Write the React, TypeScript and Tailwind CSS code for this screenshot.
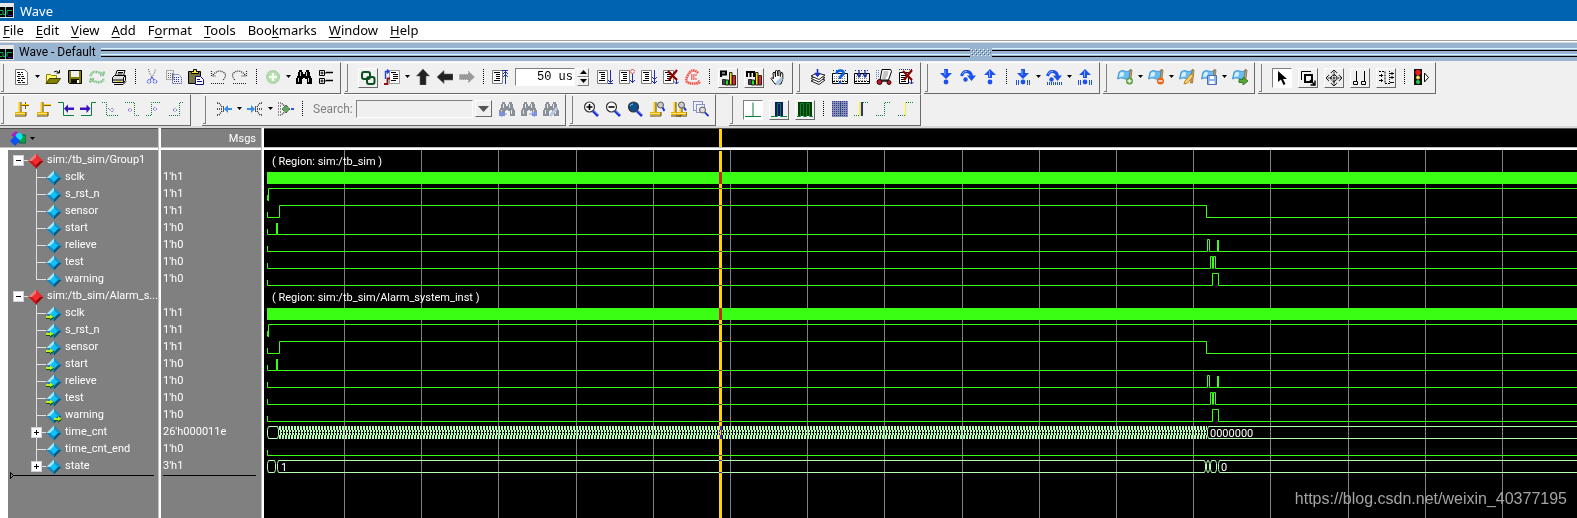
import React, { useState } from 'react';
import clsx from 'clsx';

/* ---------- icons, all on a 16x16 grid ---------- */

const RunDoc = ({ children }: { children?: React.ReactNode }) => (
  <>
    <path d="M0.500 1.500h10v13h-10z" fill="#fff" stroke="#808080" />
    <path d="M2 3.500h6M4 5.500h4M4 7.500h4M4 9.500h4M2 11.500h6" stroke="#000" />
    {children}
  </>
);

const Flag = ({ children }: { children?: React.ReactNode }) => (
  <>
    <path d="M13 0.500l2 0.500-1.500 13h-2z" fill="#d8a050" stroke="#8a5a1c" strokeWidth=".7" />
    <path d="M2 3Q4.500 0.500 7.500 2T13 1.500L12 9.500Q9 11 6.500 9.500T0.500 10z" fill="#6cbcf0" stroke="#2a86c8" strokeWidth=".8" />
    <path d="M3 4Q5 2.500 7 3.500L6.500 7.500Q4 7 2 8.500z" fill="#d5f0ff" />
    {children}
  </>
);

const Binoculars = ({ color = '#000', children }: { color?: string; children?: React.ReactNode }) => (
  <>
    <path d="M3 1h3v2h1v2h2V3h1V1h3v2h1v4h1v2h1v6h-5v-5H9V9H7v1H6v5H0V9h1V7h1V3h1z" fill={color} />
    <path d="M4.500 3v4M2.500 9v4M10.500 3v4M12.500 9v4" stroke="#fff" strokeWidth=".8" />
    {children}
  </>
);

const Lens = ({ fill = '#fff', children }: { fill?: string; children?: React.ReactNode }) => (
  <>
    <circle cx="6.500" cy="6" r="5" fill={fill} stroke="#333" strokeWidth="1.200" />
    <path d="M10 10l5 5" stroke="#1c2fd0" strokeWidth="2.600" />
    <path d="M10.500 9.500l4 4" stroke="#7fa0ff" strokeWidth=".7" />
    {children}
  </>
);

const CursorBar = ({ x = 0 }: { x?: number }) => (
  <g transform={`translate(${x} 0)`}>
    <path d="M5.500 1v10" stroke="#ffcf10" strokeWidth="2" />
    <path d="M7 1v10" stroke="#5a4300" />
    <path d="M1.500 11.500h10v2h-10z" fill="#ffe680" stroke="#e5b000" />
    <path d="M1 15h11V11" fill="none" stroke="#5a4300" />
  </g>
);

const BLUE = '#1e50f0';
const StepDown = () => (
  <>
    <path d="M6 0h4v4h4L8 10 2 4h4z" fill={BLUE} />
    <circle cx="8" cy="13" r="2.400" fill={BLUE} />
    <path d="M7 1v5" stroke="#7fb0ff" />
  </>
);
const StepUp = () => (
  <>
    <path d="M6 9h4V6h4L8 0 2 6h4z" fill={BLUE} />
    <circle cx="8" cy="13" r="2.400" fill={BLUE} />
    <path d="M7.500 2v6" stroke="#7fb0ff" />
  </>
);
const StepOver = () => (
  <>
    <path d="M1.500 7Q3 2 7 2.500T11.500 7" fill="none" stroke={BLUE} strokeWidth="3" />
    <path d="M7 6.500h9L11.500 12z" fill={BLUE} />
    <circle cx="5.500" cy="10.500" r="2.200" fill={BLUE} />
    <path d="M2 5Q4 2 7 2.500" fill="none" stroke="#8fb8ff" />
  </>
);
const BlueTicks = () => <path d="M1.500 11v5M3.500 11v5M12.500 11v5M14.500 11v5" stroke={BLUE} />;

const Film = ({ children }: { children?: React.ReactNode }) => (
  <>
    <path d="M0.500 4.500h15v10h-15z" fill="#fff" stroke="#000" />
    <path d="M1 1.500h14" stroke="#1a2d90" strokeDasharray="1 2" />
    <path d="M2 7.500h12M2 9.500h12M2 11.500h12" stroke="#888" strokeDasharray="1 1" />
    <path d="M1 12.500h14" stroke="#000" strokeDasharray="2 1" />
    {children}
  </>
);

const RedX = () => <path d="M5 2l9 9M14 1L6 11" stroke="#8b0000" strokeWidth="2.200" />;

const Bars = ({ letter }: { letter: 'p' | 'm' }) => (
  <>
    {letter === 'p'
      ? <path d="M1 7V1.500h5v3H2" fill="none" stroke="#000" strokeWidth="2" />
      : <path d="M1 7V2h7v5M4.500 2v5" fill="none" stroke="#000" strokeWidth="2" />}
    <path d="M2.500 9.500h3v5h-3z" fill="#444" stroke="#222" />
    <path d="M5.500 10h3v5h-3z" fill="#20e020" stroke="#222" />
    <path d="M9.500 2.500H12v12.500H9.500z" fill="#ffe000" stroke="#222" />
    <path d="M12.500 5.500H15.500v9.500h-3z" fill="#f02020" stroke="#222" />
  </>
);

const Arrow = ({ turn = 0, fill = '#222', faint = false }: { turn?: number; fill?: string; faint?: boolean }) => (
  <path
    d="M8 0l6.500 7H11v9H5V7H1.500z"
    fill={fill}
    stroke={faint ? '#f0f0f0' : '#666'}
    strokeWidth={faint ? 1 : 0.6}
    strokeDasharray={faint ? '1 1' : undefined}
    transform={`rotate(${turn} 8 8)`}
  />
);

const icons: Record<string, React.ReactNode> = {
  newDoc: (
    <>
      <path d="M1.500 0.500h9l3 3v12h-12z" fill="#fff" stroke="#777" />
      <path d="M3 3.500h6M4 5.500h5M3 7.500h8M4 9.500h7M3 11.500h6M4 13.500h7" stroke="#111" strokeDasharray="3 1" />
    </>
  ),
  open: (
    <>
      <path d="M1.500 14.500v-9h4l1 1h5v3" fill="#ffff70" stroke="#908000" />
      <path d="M1 14.500L4.500 9.500h11L12 14.500z" fill="#808000" stroke="#3f3f00" />
      <path d="M9 3Q11 1 14 3.500M14.500 1v3h-3" fill="none" stroke="#000" />
    </>
  ),
  save: (
    <>
      <path d="M1.500 1.500h13v13h-12l-1-1z" fill="#808000" stroke="#000" />
      <path d="M4 2h8v6H4z" fill="#efefef" />
      <path d="M4 10h8v5H4z" fill="#111" />
      <path d="M10 11h2v3h-2z" fill="#fff" />
    </>
  ),
  refresh: (
    <g fill="none" stroke="#7fc08a" strokeWidth="2.600" strokeDasharray="1 .5">
      <path d="M1.500 7Q3 2 8 3t6 3M11 6h4V2" />
      <path d="M14.500 10Q13 14 8 13T2 10M5 10H1v4" />
    </g>
  ),
  print: (
    <>
      <path d="M4.500 6.500L6 1.500h8L12.500 6.500" fill="#fff" stroke="#000" />
      <path d="M7 3.500h5M6.500 5h5" stroke="#000" />
      <path d="M1.500 8.500l2-2h11l-2 2v5h-11z" fill="#ddd" stroke="#000" />
      <path d="M12.500 13.500l2-2v-5M2 11h10M3 15.500h9l3-3" fill="none" stroke="#000" />
      <path d="M6 12.500h4" stroke="#e0d000" />
    </>
  ),
  cut: (
    <>
      <path d="M4.500 0l1 4 2.500 4 2.500-4 1-4" fill="none" stroke="#555" strokeDasharray="1 1" />
      <path d="M8 8l-2 3M8 8l2 3" stroke="#3040f0" />
      <circle cx="5" cy="12.500" r="1.800" fill="none" stroke="#3040f0" strokeDasharray="2 1" />
      <circle cx="11" cy="12.500" r="1.800" fill="none" stroke="#3040f0" strokeDasharray="2 1" />
    </>
  ),
  copy: (
    <g fill="none" strokeDasharray="1 1">
      <path d="M0.500 1.500h7v9h-7zM2 4.500h5M2 6.500h5M2 8.500h5" stroke="#666" />
      <path d="M6.500 5.500h6l3 3v6h-9zM8 8.500h5M8 10.500h6M8 12.500h6" stroke="#2030a0" />
    </g>
  ),
  paste: (
    <>
      <path d="M0.500 2.500h12v12h-12z" fill="#7a7840" stroke="#000" />
      <path d="M3.500 3.500v-1h2v-2h3v2h2v2h-7z" fill="#ffe040" stroke="#000" />
      <path d="M7.500 7.500h5l3 3v5h-8z" fill="#fff" stroke="#101080" />
      <path d="M9 10.500h3M9 12.500h5" stroke="#101080" />
    </>
  ),
  undo: <path d="M1.500 2v5h5M3 6Q8 0 13 3t0 8M1 14.500h14" fill="none" stroke="#222" strokeWidth="1.200" strokeDasharray="1 1" />,
  redo: <path d="M14.500 2v5H9M13 6Q8 0 3 3t0 8M1 14.500h14" fill="none" stroke="#222" strokeWidth="1.200" strokeDasharray="1 1" />,
  add: (
    <>
      <circle cx="8" cy="8" r="6.500" fill="#b4dcae" stroke="#8abf85" strokeDasharray="1 .6" />
      <path d="M8 4v8M4 8h8" stroke="#f4fff0" strokeWidth="2.400" />
    </>
  ),
  find: <Binoculars />,
  tree: (
    <g fill="none" stroke="#000">
      <path d="M1.500 1.500h5v5h-5zM1.500 9.500h5v5h-5zM4 2.500v3M2.500 4h3M4 10.500v3M2.500 12h3M7 4h1M7 12h1" />
      <path d="M8 3.500h7M8 11.500h7" strokeWidth="1.400" />
    </g>
  ),
  link: (
    <g fill="none" stroke="#0a5020" strokeWidth="2">
      <rect x="2" y="2" width="8" height="7" rx="2" />
      <rect x="7" y="7" width="7.500" height="7" rx="2" />
    </g>
  ),
  restart: (
    <>
      <path d="M5.500 1.500h10v13h-10z" fill="#fff" stroke="#999" />
      <path d="M7 3.500h5M9 5.500h5M9 7.500h5M9 9.500h5M7 11.500h5" stroke="#000" />
      <path d="M1.500 10V2.500H4M3 .5L5 2.500 3 4.500" stroke="#2040e0" strokeWidth="1.400" fill="none" />
      <path d="M0 15h3.500V9.500H6" fill="none" stroke="#90101a" strokeWidth="1.800" />
    </>
  ),
  up: <Arrow />,
  left: <Arrow turn={270} />,
  right: <Arrow turn={90} fill="#999" faint />,
  runTop: <RunDoc><path d="M13.500 2v13M10 1.500h6M11 5l2.500-2.500L16 5M11 8l2.500-2.500L16 8" fill="none" stroke="#1c2fa8" /></RunDoc>,
  run: <RunDoc><path d="M13.500 1v12M11 11l2.500 2.500L16 11M11 14.500h5" fill="none" stroke="#1c2fa8" /></RunDoc>,
  runNext: <RunDoc><path d="M13.500 5v9M11 11l2.500 2.500L16 11" fill="none" stroke="#1c2fa8" /><path d="M13.500 0L16 2.500 13.500 5 11 2.500z" fill="#fff" stroke="#e03030" /></RunDoc>,
  runAll: <RunDoc><path d="M13.500 1v14M11 8l2.500 2.500L16 8M11 12l2.500 2.500L16 12" fill="none" stroke="#1c2fa8" /></RunDoc>,
  runBreak: <RunDoc><path d="M13.500 9v6M11 12.500l2.500 2.500L16 12.500" fill="none" stroke="#1c2fa8" /><RedX /></RunDoc>,
  stop: (
    <g fill="none" stroke="#f05048" strokeDasharray="1.500 .6">
      <path d="M13 4Q11 1.500 8 1.500T2 8t6 6.500 5-2.500" strokeWidth="2.600" />
      <path d="M6 6h6M6 8h4M6 10h6" strokeWidth="1.400" />
    </g>
  ),
  profP: <Bars letter="p" />,
  profM: <Bars letter="m" />,
  hand: (
    <>
      <path d="M5 15L1 9.500Q1 8 3.500 9.500L3 4Q4 2 5 4l.5 4V2Q6.500 0 7.500 2l.5 5V2Q9 .5 10 2l.3 5.500L11 3.500Q12.500 3 12.800 5v5L11 15z" fill="#fff" stroke="#111" />
      <path d="M6 13l5-5 2 2-4 6H6z" fill="#a8c4e8" />
    </>
  ),
  layers: (
    <g fill="#fff" stroke="#222">
      <path d="M1 12l6-3 8 2-6 4.500z" />
      <path d="M1 9.500l6-3 8 2-6 4.500z" />
      <path d="M1 7l6-3 8 2-6 4.500z" />
      <path d="M7.500 0v6M5 4l2.500 3L10 4" stroke="#1c2fc8" strokeWidth="1.600" fill="none" />
    </g>
  ),
  filmHelp: <Film><path d="M4.500 5Q5 1.500 8.500 1.500t3 3.500Q8 7 8 10M8 12.500v2.500" fill="none" stroke="#0a60e0" strokeWidth="2.600" /></Film>,
  filmArrows: <Film><path d="M5 1v6M11 1v6M3 5l2 3 2-3M9 5l2 3 2-3" fill="none" stroke="#1c2fa8" strokeWidth="1.300" /></Film>,
  scroll: (
    <>
      <path d="M0 1.500h4M0 3.500h4M0 5.500h4M0 7.500h3M0 9.500h2" stroke="#7080c0" strokeDasharray="1 1" />
      <path d="M6 .5h8.500l1 2L12.500 11H4z" fill="#fff" stroke="#000" />
      <path d="M7.500 3h5M7 5h5M6.500 7h5M6 9h4" stroke="#888" />
      <circle cx="3.500" cy="13" r="2.500" fill="#c01828" stroke="#400" />
      <circle cx="13" cy="13.500" r="2" fill="#c01828" stroke="#400" />
      <path d="M5 12h7" stroke="#000" strokeWidth="1.400" />
    </>
  ),
  filmBreak: (
    <>
      <path d="M1.500 3.500h9v11h-9z" fill="#fff" stroke="#000" />
      <path d="M1 0.500h14" stroke="#1a2d90" strokeDasharray="1 1" />
      <path d="M3 6.500h5M3 8.500h5M3 10.500h5M3 12.500h5" stroke="#000" />
      <path d="M13.500 11v4M11.500 13l2 2 2-2" stroke="#1c2fa8" fill="none" />
      <RedX />
    </>
  ),
  stepIn: <StepDown />,
  stepOver: <StepOver />,
  stepOut: <StepUp />,
  stepInTicks: <><StepDown /><BlueTicks /></>,
  stepOverTicks: <><StepOver /><path d="M1 14.500h15" stroke={BLUE} strokeWidth="3" strokeDasharray="1 1" /></>,
  stepOutTicks: <><StepUp /><BlueTicks /></>,
  flagAdd: <Flag><circle cx="12.500" cy="12" r="3.500" fill="#5aa040" /><path d="M12.500 10v4M10.500 12h4" stroke="#fff" strokeWidth="1.400" /></Flag>,
  flagDel: <Flag><circle cx="12.500" cy="12" r="3.500" fill="#f06418" /><path d="M10.500 12h4" stroke="#fff" strokeWidth="1.400" /></Flag>,
  flagEdit: <Flag><path d="M5 15l1-3 6-7 2.500 2-6 7z" fill="#ffd070" stroke="#c08020" /></Flag>,
  flagSave: <Flag><path d="M6.500 6.500h9v9h-9z" fill="#8fb4e8" stroke="#4a70b8" /><path d="M9 7h4v3H9zM8.500 12h5v3h-5z" fill="#fff" /></Flag>,
  flagGo: <Flag><path d="M7 10.500h4V8l5 4-5 4v-2.500H7z" fill="#5aa83c" stroke="#3a7a24" /></Flag>,
  pointer: <path d="M4 1v11l3-2.500 2.500 5.500 2-1L9 9h4z" fill="#000" />,
  zoomBox: (
    <g fill="none" stroke="#000">
      <path d="M1.500 10V1.500h9.500" />
      <path d="M5 5h7v7H5z" strokeWidth="2" />
      <path d="M10 10l5 5M15 10.500V15h-4.500" strokeWidth="1.400" />
    </g>
  ),
  move: <path d="M8 0v16M0 8h16M8 0L5 3M8 0l3 3M8 16l-3-3M8 16l3-3M0 8l3-3M0 8l3 3M16 8l-3-3M16 8l-3 3M8 4l4 4-4 4-4-4z" fill="none" stroke="#000" strokeWidth="1.200" strokeDasharray="1 .7" />,
  measure: <path d="M4.500 1v11M12.500 1v11M1.500 11.500h4v3h-4zM9.500 11.500h4v3h-4z" fill="none" stroke="#000" />,
  edges: (
    <g fill="none" stroke="#000">
      <path d="M1 1.500h6v12h5" strokeDasharray="2 1" />
      <path d="M11.500 1v12" strokeDasharray="1 1" />
      <path d="M1 5.500h4M3.500 4v3M1 10.500h4M3.500 9v3M12 3.500h4M14 2v3M12 7.500h4M14 6v3M12 12.500h4" />
    </g>
  ),
  traffic: (
    <>
      <path d="M1 0h8v16H1z" fill="#111" />
      <circle cx="5" cy="3.500" r="2.700" fill="#f01818" />
      <circle cx="5" cy="8.500" r="1.900" fill="#f5e050" />
      <circle cx="5" cy="13" r="2" fill="#20d040" />
      <path d="M11.500 4v9l4-4.500z" fill="#fff" stroke="#111" />
    </>
  ),
  cursorAdd: <><CursorBar /><path d="M11.500 1v7M8 4.500h7" stroke="#806000" /><path d="M8 3.500h7" stroke="#ffcf10" /></>,
  cursorDel: <><CursorBar /><path d="M8 4.500h7" stroke="#806000" /><path d="M8 3.500h7" stroke="#ffcf10" /></>,
  edgePrev: <><path d="M0 1.500h5.500v13H16" fill="none" stroke="#0a8038" /><path d="M6 7.500l4-4v3h6v2.500h-6v3z" fill="#3a10c0" /></>,
  edgeNext: <><path d="M16 1.500h-4.500v13H1" fill="none" stroke="#0a8038" /><path d="M10.500 7.500l-4-4v3H0v2.500h6.500v3z" fill="#3a10c0" /></>,
  fallPrev: <><path d="M0 1.500h4.500v13H16" fill="none" stroke="#0a8038" strokeDasharray="1 1" /><path d="M6 7l2 2 2-2 2 2-2 2-2-2" fill="none" stroke="#6040d0" strokeDasharray="1 1" /></>,
  fallNext: <><path d="M1 1.500h9.500v13H16" fill="none" stroke="#0a8038" strokeDasharray="1 1" /><path d="M4 9l2-2 2 2-2 2z" fill="none" stroke="#6040d0" strokeDasharray="1 1" /></>,
  risePrev: <><path d="M0 14.500h5.500v-13H15" fill="none" stroke="#0a8038" strokeDasharray="1 1" /><path d="M7 8l2-2 2 2-2 2z" fill="none" stroke="#6040d0" strokeDasharray="1 1" /></>,
  riseNext: <><path d="M1 14.500h10.500v-13H16" fill="none" stroke="#0a8038" strokeDasharray="1 1" /><path d="M5 9l2-2 2 2-2 2z" fill="none" stroke="#6040d0" strokeDasharray="1 1" /></>,
  expand: <><path d="M1 2h2l3 4h2M1 8h7M1 14h2l3-4h2" fill="none" stroke="#222" strokeWidth="1.300" strokeDasharray="1 1" /><path d="M8 8l4-4v3h4v2h-4v3z" fill="#3c8cf0" /></>,
  collapse: <><path d="M15 2h-2l-3 4H8M15 8H8M15 14h-2l-3-4H8" fill="none" stroke="#222" strokeWidth="1.300" strokeDasharray="1 1" /><path d="M8 8L4 4v3H0v2h4v3z" fill="#3c8cf0" /></>,
  expandAll: <><path d="M0 2h3l4 3M0 14h3l4-3M0 8h4M0 5h4M0 11h4" fill="none" stroke="#222" strokeWidth="1.200" strokeDasharray="1 1" /><path d="M8 4l4 4-4 4-4-4z" fill="#5ca860" stroke="#222" strokeDasharray="1 1" /><path d="M13 8h3" stroke="#3050f0" strokeWidth="2" /></>,
  findPrev: <Binoculars color="#8a8f98"><path d="M0 13l3-2.500v5zM3 13h5" fill="#7a90f8" stroke="#7a90f8" /></Binoculars>,
  findNext: <Binoculars color="#8a8f98"><path d="M16 13l-3-2.500v5zM13 13H8" fill="#7a90f8" stroke="#7a90f8" /></Binoculars>,
  findOpts: <Binoculars color="#8a8f98"><path d="M7 15l7-8" stroke="#b8c8e0" strokeWidth="3" /></Binoculars>,
  zoomIn: <Lens><path d="M6.500 3v6M3.500 6h6" stroke="#000" strokeWidth="1.600" /></Lens>,
  zoomOut: <Lens><path d="M3.500 6h6" stroke="#000" strokeWidth="1.600" /></Lens>,
  zoomFull: <Lens fill="#0c5090"><path d="M3 5q1-2 3-2" fill="none" stroke="#9cd0ff" /></Lens>,
  zoomCursor: <><CursorBar /><circle cx="11.500" cy="4" r="3" fill="#ccc" stroke="#555" /><path d="M13.500 6.500l2 3.500" stroke="#2030d0" strokeWidth="2" /></>,
  zoomTwo: <><CursorBar x={-2} /><CursorBar x={4} /><circle cx="10.500" cy="4" r="3" fill="#ccc" stroke="#555" /><path d="M13 6.500l2 3" stroke="#2030d0" strokeWidth="2" /></>,
  zoomRange: <><path d="M0.500 0.500h9v3M0.500 0.500v9h3M3.500 3.500h8v8h-8z" fill="none" stroke="#2038a0" strokeDasharray="1 1" /><circle cx="9.500" cy="9" r="3" fill="#ddd" stroke="#555" /><path d="M12 11.500l3.500 3.500" stroke="#2030d0" strokeWidth="1.800" /></>,
  fmtLogic: <path d="M0 14.500h16M8 14V0.500" stroke="#0a8038" />,
  fmtLiteral: <><path d="M4 0h8v14H4z" fill="#101868" /><path d="M0 14.500h6.500V1.500h3v13H16" fill="none" stroke="#0a8038" /></>,
  fmtEvent: <><path d="M1 0h14v14H1z" fill="#004000" /><path d="M0 14.500h3.500V1.500h3v13h3V1.500h3v13H16" fill="none" stroke="#0a8038" /></>,
  fmtGrid: <><path d="M0 0h16v16H0z" fill="#8c90bc" /><path d="M0 .5h16M0 2.500h16M0 4.500h16M0 6.500h16M0 8.500h16M0 10.500h16M0 12.500h16M0 14.500h16" stroke="#2c3488" strokeDasharray="1 1" /><path d="M8.500 1v14" stroke="#0a8038" strokeDasharray="1 1" /></>,
  fmtBoth: <><path d="M5 1h2v14H5z" fill="#f8f040" /><path d="M7 1h2v14H7z" fill="#2c3488" /><path d="M0 14.500h5M9 1.500h6" stroke="#0a8038" strokeDasharray="1 1" /></>,
  fmtRise: <path d="M0 14.500h8.500v-13H15" fill="none" stroke="#0a8038" strokeDasharray="1 1" />,
  fmtFall: <><path d="M0 14.500h7M8 1.500h7" stroke="#0a8038" strokeDasharray="1 1" /><path d="M7.500 1v14" stroke="#f8f020" /></>,
};

/* ---------- toolbar parts ---------- */

function Glyph({ name }: { name: string }) {
  return (
    <svg width="16" height="16" viewBox="0 0 16 16" className="shrink-0">
      {icons[name]}
    </svg>
  );
}

function Tool({ name }: { name: string }) {
  return (
    <button aria-label={name} className="flex w-[22px] shrink-0 items-center justify-center">
      <Glyph name={name} />
    </button>
  );
}

function BoxTool({ name, on = false }: { name: string; on?: boolean }) {
  return (
    <button
      aria-label={name}
      aria-pressed={on}
      className={clsx(
        'mx-[3px] mt-[3px] flex size-5 shrink-0 items-center justify-center border',
        on ? 'border-t-[#808080] border-l-[#808080] border-r-white border-b-white bg-white' : 'border-t-white border-l-white border-r-[#696969] border-b-[#696969]',
      )}
    >
      <Glyph name={name} />
    </button>
  );
}

function Caret() {
  return (
    <button aria-label="menu" className="flex w-[9px] shrink-0 items-center justify-center">
      <svg width="5" height="3" viewBox="0 0 5 3"><path d="M0 0h5L2.500 3z" /></svg>
    </button>
  );
}

const Sep = () => <span className="mx-[5px] my-[6px] w-px shrink-0 border-l border-dotted border-black" />;

function Bar({ children, className }: { children: React.ReactNode; className?: string }) {
  return (
    <div className={clsx('flex h-8 shrink-0 border-t border-r border-b border-t-white border-r-[#696969] border-b-[#696969] pr-[3px]', className)}>
      <span className="my-px mr-[7px] ml-px w-[3px] border-r border-b border-[#808080]" />
      <div className="flex items-center pb-[3px] [&>span]:self-stretch">{children}</div>
    </div>
  );
}

const Tools = ({ names }: { names: string[] }) => <>{names.map((n) => <Tool key={n} name={n} />)}</>;

function AppIcon() {
  return (
    <svg width="14" height="15" viewBox="0 0 14 15" className="shrink-0">
      <path d="M0 0h14v15H0z" fill="#000" />
      <path d="M0 0h13v4H0z" fill="#e8e8e8" />
      <path d="M0 7.500h3v4h3M7 11.500v-4h5M0 11.500h2" fill="none" stroke="#10b050" />
      <path d="M5.500 4v10" stroke="#30d0e0" />
      <path d="M8 12.500h4" stroke="#3018c0" />
      <path d="M13.500 0v15M0 14.500h14" stroke="#ddd" />
    </svg>
  );
}

const menus: [string, string, string][] = [
  ['', 'F', 'ile'], ['', 'E', 'dit'], ['', 'V', 'iew'], ['', 'A', 'dd'], ['F', 'o', 'rmat'],
  ['', 'T', 'ools'], ['Boo', 'k', 'marks'], ['', 'W', 'indow'], ['', 'H', 'elp'],
];

function Toolbars() {
  const [step, setStep] = useState('50 us');
  return (
    <div className="overflow-hidden bg-[#f0f0f0] pt-px">
      <div className="flex gap-[3px]">
        <Bar>
          <Tool name="newDoc" /><Caret />
          <Tools names={['open', 'save', 'refresh', 'print']} /><Sep />
          <Tools names={['cut', 'copy', 'paste', 'undo', 'redo']} /><Sep />
          <Tool name="add" /><Caret />
          <Tools names={['find', 'tree']} />
        </Bar>
        <Bar>
          <BoxTool name="link" />
          <Tool name="restart" /><Caret />
          <Tools names={['up', 'left', 'right']} /><Sep />
          <Tool name="runTop" />
          <input
            aria-label="Run length"
            value={step}
            onChange={(e) => setStep(e.target.value)}
            className="ml-1 h-[18px] w-[60px] border border-t-[#808080] border-l-[#808080] border-r-white border-b-white bg-white pr-px text-right font-['Liberation_Mono'] text-[12px] leading-4"
          />
          <div className="mr-[5px] ml-[2px] flex w-3 flex-col">
            {['M0 4h7L3.500 0z', 'M0 0h7L3.500 4z'].map((d, i) => (
              <button key={d} aria-label={i ? 'decrease' : 'increase'} className="flex h-[9px] items-center justify-center border border-t-white border-l-white border-r-[#808080] border-b-[#808080]">
                <svg width="7" height="4" viewBox="0 0 7 4"><path d={d} /></svg>
              </button>
            ))}
          </div>
          <Tools names={['run', 'runNext', 'runAll', 'runBreak', 'stop']} /><Sep />
          <BoxTool name="profP" /><BoxTool name="profM" /><Tool name="hand" />
        </Bar>
        <Bar><Tools names={['layers', 'filmHelp', 'filmArrows', 'scroll', 'filmBreak']} /></Bar>
        <Bar>
          <Tools names={['stepIn', 'stepOver', 'stepOut']} /><Sep />
          <Tool name="stepInTicks" /><Caret /><Tool name="stepOverTicks" /><Caret /><Tool name="stepOutTicks" />
        </Bar>
        <Bar>
          <Tool name="flagAdd" /><Caret /><Tool name="flagDel" /><Caret />
          <Tools names={['flagEdit', 'flagSave']} /><Caret /><Tool name="flagGo" />
        </Bar>
        <Bar>
          <BoxTool name="pointer" on />
          <BoxTool name="zoomBox" /><BoxTool name="move" /><BoxTool name="measure" /><BoxTool name="edges" />
          <Sep /><Tool name="traffic" />
        </Bar>
      </div>
      <div className="flex gap-[3px]">
        <Bar className="mr-2">
          <Tools names={['cursorAdd', 'cursorDel', 'edgePrev', 'edgeNext', 'fallPrev', 'fallNext', 'risePrev', 'riseNext']} />
        </Bar>
        <Bar>
          <Tool name="expand" /><Caret /><Tool name="collapse" /><Caret /><Tool name="expandAll" /><Sep />
          <label htmlFor="search" className="w-12 pl-[5px] font-['Roboto'] text-[12px] leading-4 text-[#808080]">Search:</label>
          <select id="search" disabled className="h-[18px] w-[117px] appearance-none border border-t-[#808080] border-l-[#808080] border-r-white border-b-white bg-[#f0f0f0]" />
          <button aria-label="history" className="mr-1 ml-[2px] flex h-[17px] w-[17px] items-center justify-center border border-t-white border-l-white border-r-[#696969] border-b-[#696969]">
            <svg width="11" height="6" viewBox="0 0 11 6"><path d="M0 0h11L5.500 6z" fill="#555" /></svg>
          </button>
          <Tools names={['findPrev', 'findNext', 'findOpts']} />
        </Bar>
        <Bar><Tools names={['zoomIn', 'zoomOut', 'zoomFull', 'zoomCursor', 'zoomTwo', 'zoomRange']} /></Bar>
        <Bar className="ml-[10px]">
          <BoxTool name="fmtLogic" on /><BoxTool name="fmtLiteral" /><BoxTool name="fmtEvent" /><Sep />
          <Tools names={['fmtGrid', 'fmtBoth', 'fmtRise', 'fmtFall']} />
        </Bar>
      </div>
    </div>
  );
}

/* ---------- signals ---------- */

type Signal = {
  name: string;
  value?: string;
  kind: 'group' | 'net' | 'in' | 'out';
  open?: boolean;
  bus?: boolean;
  last?: boolean;
  region?: string;
};

const signals: Signal[] = [
  { name: 'sim:/tb_sim/Group1', kind: 'group', region: '( Region: sim:/tb_sim )' },
  { name: 'sclk', value: "1'h1", kind: 'net' },
  { name: 's_rst_n', value: "1'h1", kind: 'net' },
  { name: 'sensor', value: "1'h1", kind: 'net' },
  { name: 'start', value: "1'h0", kind: 'net' },
  { name: 'relieve', value: "1'h0", kind: 'net' },
  { name: 'test', value: "1'h0", kind: 'net' },
  { name: 'warning', value: "1'h0", kind: 'net', last: true },
  { name: 'sim:/tb_sim/Alarm_s...', kind: 'group', region: '( Region: sim:/tb_sim/Alarm_system_inst )' },
  { name: 'sclk', value: "1'h1", kind: 'in' },
  { name: 's_rst_n', value: "1'h1", kind: 'in' },
  { name: 'sensor', value: "1'h1", kind: 'in' },
  { name: 'start', value: "1'h0", kind: 'in' },
  { name: 'relieve', value: "1'h0", kind: 'in' },
  { name: 'test', value: "1'h0", kind: 'in' },
  { name: 'warning', value: "1'h0", kind: 'out' },
  { name: 'time_cnt', value: "26'h000011e", kind: 'net', bus: true },
  { name: 'time_cnt_end', value: "1'h0", kind: 'net' },
  { name: 'state', value: "3'h1", kind: 'net', bus: true, last: true },
];

function Diamond({ kind }: { kind: Signal['kind'] }) {
  const red = kind === 'group';
  return (
    <svg width="16" height="16" viewBox="0 0 16 16" className="shrink-0">
      <path d="M8 0.500L0.500 8H8z" fill={red ? '#f08080' : '#a0e8f8'} />
      <path d="M8 0.500L15.500 8H8z" fill={red ? '#e03030' : '#1890c8'} />
      <path d="M0.500 8L8 15.500V8z" fill={red ? '#d01818' : '#1088c0'} />
      <path d="M15.500 8L8 15.500V8z" fill={red ? '#980808' : '#085880'} />
      <path d="M8 4l4 4-4 4-4-4z" fill={red ? '#f03030' : '#10c0f8'} />
      {(kind === 'in' || kind === 'out') && (
        <g transform={kind === 'in' ? 'translate(0 7)' : 'translate(8 7)'}>
          <path d="M0 3h4V1l4 3.500L4 8V6H0z" fill="#105008" />
          <path d="M0 3h4V1l3.500 3L4 6V5H0z" fill="#b8f020" />
        </g>
      )}
    </svg>
  );
}

function Toggle({ open, onClick, label }: { open: boolean; onClick: () => void; label: string }) {
  return (
    <button aria-label={label} aria-expanded={open} onClick={onClick} className="flex size-[11px] shrink-0 items-center justify-center border border-[#d0d0d8] bg-white">
      <svg width="5" height="5" viewBox="0 0 5 5"><path d={open ? 'M0 2.500h5' : 'M0 2.500h5M2.500 0v5'} stroke="#000" /></svg>
    </button>
  );
}

function SignalRow({ s }: { s: Signal }) {
  const [open, setOpen] = useState(s.kind === 'group');
  return (
    <div className="flex h-[17px] items-center">
      {s.kind === 'group' && (
        <>
          <span className="w-[5px] shrink-0" />
          <Toggle open={open} onClick={() => setOpen(!open)} label={s.name} />
          <span className="h-px w-1 shrink-0 bg-[#e0e0e0]" />
        </>
      )}
      {s.kind !== 'group' && s.bus && (
        <>
          <div className="ml-[23px] flex shrink-0 flex-col items-center">
            <span className="h-[3px] w-px bg-[#e0e0e0]" />
            <Toggle open={open} onClick={() => setOpen(!open)} label={s.name} />
            <span className={clsx('h-[3px] w-px', !s.last && 'bg-[#e0e0e0]')} />
          </div>
          <span className="h-px w-1 shrink-0 bg-[#e0e0e0]" />
        </>
      )}
      {s.kind !== 'group' && !s.bus && (
        <span className="ml-7 flex w-[10px] shrink-0 flex-col self-stretch">
          <span className="h-[9px] border-b border-l border-[#e0e0e0]" />
          {!s.last && <span className="grow border-l border-[#e0e0e0]" />}
        </span>
      )}
      <Diamond kind={s.kind} />
      <span className="pb-px pl-[3px] leading-4 whitespace-nowrap">{s.name}</span>
    </div>
  );
}

/* ---------- wave forms ---------- */

const GREEN = '#3aff14';
const BUS = '#b4ffb4';
const END = 4000;
const rowTop = (i: number) => 2 + 17 * i;

function Trace({ i, name }: { i: number; name: string }) {
  const top = rowTop(i);
  const hi = top + 2.5;
  const lo = top + 14.5;
  const tick = `M3.500 ${top + 9}V${lo}`;
  const pulse = (a: number, b: number) => `H${a}V${hi}H${b}V${lo}`;
  const block = (x: number) => <rect x={x} y={top + 3} width="2" height="12" fill={GREEN} />;
  const line = (d: string) => <path d={d} fill="none" stroke={GREEN} />;

  switch (name) {
    case 'sclk':
      return <rect x="3" y={top + 3} width={END} height="12" fill={GREEN} />;
    case 's_rst_n':
      return line(`${tick}M4.500 ${top + 15}V${hi}H${END}`);
    case 'sensor':
      return line(`${tick}H15.500V${hi}H942.500V${lo}H${END}`);
    case 'start':
      return <>{line(`${tick}H${END}`)}{block(12)}</>;
    case 'relieve':
      return <>{line(`${tick}${pulse(943.5, 945.5)}H${END}`)}{block(953)}</>;
    case 'test':
      return line(`${tick}${pulse(946.5, 948.5)}${pulse(949.5, 951.5)}H${END}`);
    case 'warning':
      return line(`${tick}${pulse(948.5, 954.5)}H${END}`);
    case 'time_cnt_end':
      return line(`${tick}H${END}`);
    default:
      return null;
  }
}

// one bus value: a box with clipped corners from a to b
function busBox(i: number, a: number, b: number) {
  const hi = rowTop(i) + 2.5;
  const lo = hi + 12;
  return `M${a + 1.5} ${hi}H${b - 1.5}L${b - 0.5} ${hi + 3}V${lo - 3}L${b - 1.5} ${lo}H${a + 1.5}L${a + 0.5} ${lo - 3}V${hi + 3}z`;
}

function Waves() {
  const grid = Array.from({ length: 48 }, (_, k) => 80 + Math.round(k * 77.2));
  return (
    <svg className="block h-full w-full bg-black font-['Roboto'] text-[11px]" fill="#fff">
      <defs>
        <pattern id="busy" width="3" height="13" patternUnits="userSpaceOnUse" x="15" y={rowTop(16) + 2}>
          <path d="M0 0h2v4H0zM2 4h1v2H2zM1 4h1v5H1zM2 7h1v2H2zM0 9h2v4H0z" fill={BUS} />
        </pattern>
      </defs>
      {grid.map((x) => <rect key={x} x={x} y="0" width="1" height="100%" fill="#808080" />)}
      {signals.map((s, i) => s.region
        ? <text key={i} x="8" y={rowTop(i) + 13}>{s.region}</text>
        : <Trace key={i} i={i} name={s.name} />)}
      <g fill="none" stroke={BUS}>
        <path d={busBox(16, 3, 15)} />
        <path d={busBox(16, 943, END)} />
        <path d={busBox(18, 3, 12)} />
        <path d={busBox(18, 13, 942)} />
        <path d={busBox(18, 942, 946)} />
        <path d={busBox(18, 946, 953)} />
        <path d={busBox(18, 954, END)} />
      </g>
      <rect x="15" y={rowTop(16) + 2} width="928" height="13" fill="url(#busy)" />
      <text x="946" y={rowTop(16) + 13}>0000000</text>
      <text x="17" y={rowTop(18) + 13}>1</text>
      <text x="957" y={rowTop(18) + 13}>0</text>
      <rect x="455" y="1" width="3" height="100%" fill="#ffd700" className="mix-blend-difference" />
    </svg>
  );
}

const HEAD = 'flex h-5 shrink-0 items-center border-t border-b border-t-[#505050] border-b-[#c0c0c0]';

export default function App() {
  return (
    <div className="flex min-h-screen flex-col overflow-hidden bg-white font-['Noto_Sans',sans-serif] text-[13px] text-black">
      <header className="flex h-[21px] items-center gap-[6px] bg-[#0063b1] text-white">
        <AppIcon />
        <h1 className="leading-5">Wave</h1>
      </header>
      <nav className="flex h-[19px] items-center gap-3 pl-[3px]">
        {menus.map(([a, key, b]) => (
          <button key={a + key + b} className="leading-[19px]">{a}<u className="underline-offset-2">{key}</u>{b}</button>
        ))}
      </nav>
      <div className="h-[3px] border-t border-b border-t-[#a0a0a0] border-b-[#d8d8d8] bg-white" />
      <div className="flex h-[18px] items-center gap-[5px] bg-[#99b4d1]">
        <AppIcon />
        <h2 className="font-['Roboto'] text-[12px] leading-[18px]">Wave - Default</h2>
        <div className="flex flex-[870] flex-col gap-px">
          <div className="h-[3px] border-t border-b border-t-[#d8f4ff] border-b-black" />
          <div className="h-px" />
          <div className="h-[3px] border-t border-b border-t-[#d8f4ff] border-b-black" />
        </div>
        <svg width="22" height="9" className="-mx-[5px] shrink-0">
          <path d="M1 1.500h20M1 5.500h20" stroke="#fff" strokeDasharray="1 3" />
          <path d="M3 3.500h20M3 7.500h20" stroke="#fff" strokeDasharray="1 3" />
          <path d="M2 2.500h20M2 6.500h20M4 4.500h20" stroke="#46607c" strokeDasharray="1 3" />
        </svg>
        <div className="flex flex-[586] flex-col gap-px">
          <div className="h-[3px] border-t border-b border-t-[#d8f4ff] border-b-black" />
          <div className="h-px" />
          <div className="h-[3px] border-t border-b border-t-[#d8f4ff] border-b-black" />
        </div>
      </div>
      <Toolbars />
      <div className="h-[2px] bg-[#d8d8d8]" />

      <main className="relative flex flex-1 font-['Roboto',sans-serif] text-[11px] leading-[17px] text-white">
        <section className="flex w-[158px] shrink-0 flex-col">
          <div className={clsx(HEAD, 'gap-[2px] bg-[#808080] pl-[10px]')}>
            <svg width="16" height="16" viewBox="0 0 16 16">
              <path d="M1 5l5-4 4 4-5 3z" fill="#b018c8" />
              <path d="M9 5h7v8H9z" fill="#10a040" stroke="#064" />
              <circle cx="9" cy="6.500" r="3.500" fill="#10e0f0" />
              <path d="M5 5.500L10 11l-5 5-5-5z" fill="#1050f0" />
            </svg>
            <Caret />
          </div>
          <div className="flex grow flex-col border-t-2 border-white">
            <div className="ml-2 grow bg-[#808080] pt-[2px]">
              {signals.map((s, i) => <SignalRow key={i} s={s} />)}
              <div className="relative mr-1 ml-[5px] h-px bg-black">
                <svg width="4" height="7" className="absolute -top-[3px] -left-[3px]"><path d="M0.500 0.500v6L3.500 3.500z" fill="#808080" stroke="#000" /></svg>
              </div>
            </div>
          </div>
        </section>
        <div className="w-[3px] shrink-0 border-l border-[#c0c0c0] bg-white" />
        <section className="flex w-[100px] shrink-0 flex-col">
          <div className={clsx(HEAD, 'justify-end bg-[#808080] pr-[5px]')}>Msgs</div>
          <div className="grow border-t-2 border-white bg-[#808080] px-[2px] pt-[2px]">
            {signals.map((s, i) => <div key={i} className="h-[17px] leading-4">{s.value}</div>)}
            <div className="mr-[3px] h-px bg-black" />
          </div>
        </section>
        <div className="w-[3px] shrink-0 border-l border-[#c0c0c0] bg-white" />
        <section className="flex min-w-0 flex-1 flex-col">
          <div className={clsx(HEAD, 'items-stretch bg-black')}>
            <div className="ml-[455px] w-[3px] bg-[#ffd700]" />
          </div>
          <div className="min-h-0 flex-1 border-t-2 border-white"><Waves /></div>
        </section>
        <p className="absolute right-[10px] bottom-[10px] font-['Liberation_Sans'] text-[16px] leading-[18px] text-[#a4a4a4]">
          https://blog.csdn.net/weixin_40377195
        </p>
      </main>
    </div>
  );
}
